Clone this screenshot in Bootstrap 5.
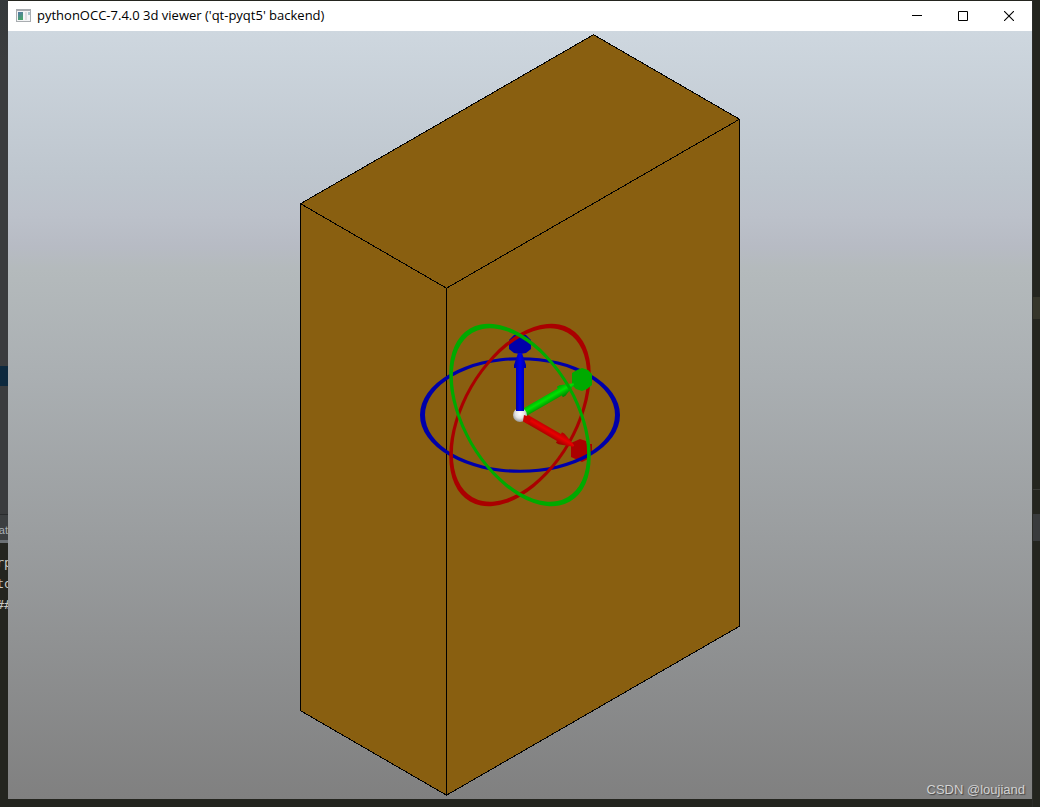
<!DOCTYPE html>
<html lang="en">
<head>
<meta charset="utf-8">
<meta name="viewport" content="width=device-width, initial-scale=1">
<title>pythonOCC-7.4.0 3d viewer</title>
<link href="https://cdn.jsdelivr.net/npm/bootstrap@5.3.0/dist/css/bootstrap.min.css" rel="stylesheet">
<style>
  body { background: #24251f; font-family: "Open Sans", "Noto Sans", sans-serif; }
  .desk { display: grid; grid-template-columns: 8px minmax(0, 1fr) 8px; }
  .edge-left { background: linear-gradient(#35393b, #3a3c3e 60px); }
  .edge-tree { flex: 365 0 0; }
  .edge-pick { flex: 20 0 0; background: #0d293e; }
  .edge-gap { flex: 128 0 0; border-bottom: 1px solid #292b2d; }
  .edge-tab { flex: 25 0 0; background: #3c3f41; color: #a9b0b5; font-family: "Liberation Sans", sans-serif; font-size: 11px; line-height: 30px; border-bottom: 3px solid #6b7074; }
  .edge-code { flex: 254 0 0; background: #24251f; color: #c8c8c2; font-family: "DejaVu Sans Mono", monospace; font-size: 13px; line-height: 21px; padding-top: 9px; }
  .edge-left > div, .edge-code > div { overflow: hidden; white-space: nowrap; }
  .clip-mid { display: flex; justify-content: center; }
  .clip-start { display: flex; justify-content: flex-end; }
  .edge-right { border-left: 1px solid #2b2c29; }
  .viewer { margin: 1px 0 8px; }
  .titlebar { height: 30px; font-size: 13px; color: #000; padding-left: 8px; }
  .winbtn { width: 46px; height: 30px; border: 0; padding: 0; background: transparent; display: flex; align-items: center; justify-content: center; }
  .scene { background: linear-gradient(#ced7df, #bec6ce 19%, #bcc1ca 24%, #b7bbc4 28%, #b4babc 31%, #aaafb2 45%, #808080); }
  .scene svg { min-height: 0; }
  .credit { right: 7px; bottom: 0; font: 13px/19px "Liberation Sans", sans-serif; color: #d2d2d2; text-shadow: 1px 1px 1px #444; }
</style>
</head>
<body>
<div class="desk vh-100 overflow-hidden">
  <div class="edge-left d-flex flex-column overflow-hidden" aria-hidden="true">
    <div class="edge-tree"></div>
    <div class="edge-pick"></div>
    <div class="edge-gap"></div>
    <div class="edge-tab clip-start">at</div>
    <div class="edge-code"><div class="clip-mid">rp</div><div class="clip-mid">to</div><div class="clip-mid">##</div></div>
  </div>
  <main class="viewer d-flex flex-column">
    <header class="titlebar bg-white d-flex align-items-center">
      <svg width="17" height="14" viewBox="0 0 17 14" aria-hidden="true">
        <defs><linearGradient id="pane" x2=".4" y2="1"><stop stop-color="#5577a8"/><stop offset="1" stop-color="#47a36c"/></linearGradient></defs>
        <path fill="#a9adb1" d="M0 0h15v13H0z"/><path fill="#f4f5f6" d="M1 2h13v10H1z"/>
        <path fill="url(#pane)" d="M2 3h5v8H2z"/><path fill="#dedfe1" d="M9 3h2v8H9z"/><path fill="#a9c8cc" d="M12 3h2v3h-2z"/>
      </svg>
      <span class="ms-1 text-nowrap">pythonOCC-7.4.0 3d viewer ('qt-pyqt5' backend)</span>
      <div class="d-flex ms-auto">
        <button class="winbtn" type="button" aria-label="Minimize"><svg width="10" height="10"><path d="M0 4.5h10" stroke="#000"/></svg></button>
        <button class="winbtn" type="button" aria-label="Maximize"><svg width="10" height="10"><path d="M.5.5h9v9h-9z" fill="none" stroke="#000"/></svg></button>
        <button class="winbtn" type="button" aria-label="Close"><svg width="10" height="10"><path d="M0 0l10 10M10 0L0 10" stroke="#000" stroke-width="1.1"/></svg></button>
      </div>
    </header>
    <section class="scene flex-fill position-relative d-flex overflow-hidden">
      <svg class="w-100" viewBox="8 31 1024 768" role="img" aria-label="Box with a manipulator at its centre">
        <defs>
          <linearGradient id="blueRod"><stop stop-color="#0000a0"/><stop offset=".5" stop-color="#0000ee"/><stop offset="1" stop-color="#0000a0"/></linearGradient>
          <linearGradient id="greenRod" x1="0" y1="0" x2="0" y2="1"><stop stop-color="#00a800"/><stop offset=".45" stop-color="#00e000"/><stop offset="1" stop-color="#008000"/></linearGradient>
          <linearGradient id="redRod" x1="0" y1="0" x2="0" y2="1"><stop stop-color="#b00000"/><stop offset=".45" stop-color="#e80000"/><stop offset="1" stop-color="#960000"/></linearGradient>
          <radialGradient id="ball" cx=".5" cy=".4" r=".65"><stop stop-color="#fff"/><stop offset=".5" stop-color="#e4e4e4"/><stop offset="1" stop-color="#8c8c8c"/></radialGradient>
          <path id="ring" fill-rule="evenodd" d="M-100 0a100 57.800 0 0 1 200 0a100 57.800 0 0 1-200 0zM-95 0a95 54.800 0 0 0 190 0a95 54.800 0 0 0-190 0z"/>
        </defs>
        <g fill="#895f10" stroke="#000" shape-rendering="crispEdges">
          <path d="M300.500 203.700L593.500 34.700L739.500 119.200V626.200L446.500 795.200L300.500 710.700z"/>
          <path fill="none" d="M300.500 203.700L446.500 288.200L739.500 119.200M446.500 288.200V795.200"/>
        </g>
        <path fill="#aa0000" d="M571 443l9-4 6 2 1 3h5v9l-4 6-6 3-11-5z"/>
        <use href="#ring" x="520" y="415" fill="#0000aa"/>
        <path fill="#0000aa" d="M509 340l5-5 6-2 6 2 5 5v9l-5 4-6 1-6-1-5-4z"/>
        <path fill="url(#blueRod)" d="M516 412V368h-2v-3l4-12h4l4 12v3h-2v44z"/>
        <use href="#ring" transform="translate(520 415) rotate(-60)" fill="#aa0000"/>
        <path transform="translate(520 415) rotate(30)" fill="url(#redRod)" d="M3-4H45V-6H48L62-1V1L48 6H45V4H3z"/>
        <path fill="#00aa00" d="M572 373l5-3 5-2 6 2 4 4v11l-5 4-5 2-6-2-4-4z"/>
        <path transform="translate(520 415) rotate(-30)" fill="url(#greenRod)" d="M5-4H46V-6H49L62-1V1L49 6H46V4H5z"/>
        <use href="#ring" transform="translate(520 415) rotate(60)" fill="#00aa00"/>
        <circle cx="520" cy="415" r="7" fill="url(#ball)"/>
        <path fill="url(#blueRod)" d="M516 400h8v11h-8z"/>
        <path fill="#cc0000" d="M524 415l8 3-4 6-5-3z"/>
      </svg>
      <div class="credit position-absolute">CSDN @loujiand</div>
    </section>
  </main>
  <div class="edge-right d-flex flex-column" aria-hidden="true">
    <div style="flex:297 0 0"></div>
    <div style="flex:22 0 0;background:#36362b"></div>
    <div style="flex:171 0 0;border-bottom:1px solid #3a3b37"></div>
    <div style="flex:24 0 0"></div>
    <div style="flex:27 0 0;background:#393b3d"></div>
    <div style="flex:266 0 0"></div>
  </div>
</div>
<script src="https://cdn.jsdelivr.net/npm/bootstrap@5.3.0/dist/js/bootstrap.bundle.min.js"></script>
</body>
</html>
